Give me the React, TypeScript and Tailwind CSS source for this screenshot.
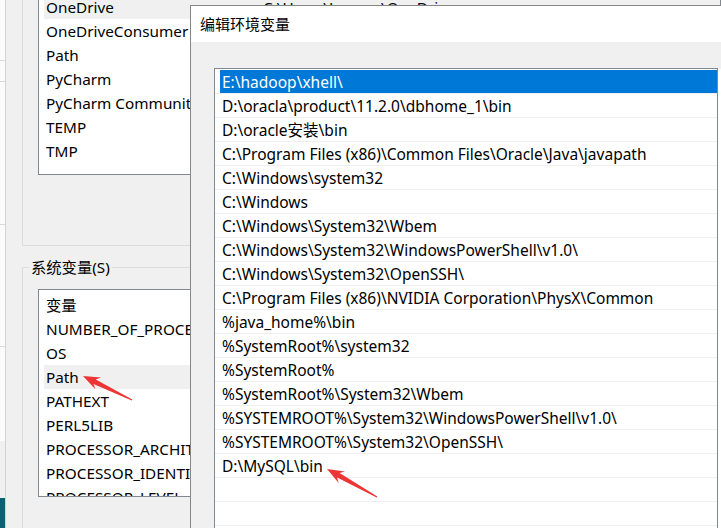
import React from "react";

const upperRows = [
  { name: "OneDrive", value: "C:\\Users\\Lenovo\\OneDrive", hl: true },
  { name: "OneDriveConsumer", value: "C:\\Users\\Lenovo\\OneDrive" },
  { name: "Path", value: "C:\\Users\\Lenovo\\AppData\\Local" },
  { name: "PyCharm", value: "D:\\PyCharm\\bin" },
  { name: "PyCharm Community Edition", value: "D:\\PyCharm CE\\bin" },
  { name: "TEMP", value: "C:\\Users\\Lenovo\\AppData\\Local\\Temp" },
  { name: "TMP", value: "C:\\Users\\Lenovo\\AppData\\Local\\Temp" },
];

const lowerRows = [
  { name: "变量" },
  { name: "NUMBER_OF_PROCESSORS" },
  { name: "OS" },
  { name: "Path", hl: true },
  { name: "PATHEXT" },
  { name: "PERL5LIB" },
  { name: "PROCESSOR_ARCHITECTURE" },
  { name: "PROCESSOR_IDENTIFIER" },
  { name: "PROCESSOR_LEVEL" },
];

const paths = [
  "E:\\hadoop\\xhell\\",
  "D:\\oracla\\product\\11.2.0\\dbhome_1\\bin",
  "D:\\oracle安装\\bin",
  "C:\\Program Files (x86)\\Common Files\\Oracle\\Java\\javapath",
  "C:\\Windows\\system32",
  "C:\\Windows",
  "C:\\Windows\\System32\\Wbem",
  "C:\\Windows\\System32\\WindowsPowerShell\\v1.0\\",
  "C:\\Windows\\System32\\OpenSSH\\",
  "C:\\Program Files (x86)\\NVIDIA Corporation\\PhysX\\Common",
  "%java_home%\\bin",
  "%SystemRoot%\\system32",
  "%SystemRoot%",
  "%SystemRoot%\\System32\\Wbem",
  "%SYSTEMROOT%\\System32\\WindowsPowerShell\\v1.0\\",
  "%SYSTEMROOT%\\System32\\OpenSSH\\",
  "D:\\MySQL\\bin",
  "",
  "",
  "",
];

function arrowPoints(tip: [number, number], tail: [number, number]) {
  const dx = tip[0] - tail[0];
  const dy = tip[1] - tail[1];
  const len = Math.hypot(dx, dy);
  const ux = dx / len;
  const uy = dy / len;
  const px = -uy;
  const py = ux;
  const headLen = 17;
  const headW = 6.5;
  const neckW = 2.6;
  const tailW = 0.6;
  const bx = tip[0] - ux * headLen;
  const by = tip[1] - uy * headLen;
  const nx = tip[0] - ux * (headLen - 4);
  const ny = tip[1] - uy * (headLen - 4);
  const pts: [number, number][] = [
    [tip[0], tip[1]],
    [bx + px * headW, by + py * headW],
    [nx + px * neckW, ny + py * neckW],
    [tail[0] + px * tailW, tail[1] + py * tailW],
    [tail[0] - px * tailW, tail[1] - py * tailW],
    [nx - px * neckW, ny - py * neckW],
    [bx - px * headW, by - py * headW],
  ];
  return pts.map((p) => `${p[0].toFixed(1)},${p[1].toFixed(1)}`).join(" ");
}

export default function App() {
  return (
    <div className="relative w-[721px] h-[528px] overflow-hidden bg-[#f0f0f0] text-[15.3px] leading-[20px] text-black font-['Noto_Sans','Noto_Sans_CJK_SC',sans-serif]">
      <div className="flex h-full">
        {/* far left strip of another window */}
        <div className="w-[5px] h-full flex flex-col shrink-0">
          <div className="h-[60px] bg-[#fbfbfb]" />
          <div className="h-px bg-[#dadada]" />
          <div className="h-[20px] bg-[#fbfbfb]" />
          <div className="h-px bg-[#dadada]" />
          <div className="h-[142px] bg-[#fbfbfb]" />
          <div className="h-px bg-[#dadada]" />
          <div className="h-[121px] bg-[#fbfbfb]" />
          <div className="h-px bg-[#dadada]" />
          <div className="h-[94px] bg-[#fbfbfb]" />
          <div className="h-[57px] bg-[#f0f0f0]" />
          <div className="flex-1 bg-[#0b6071]" />
        </div>
        <div className="w-px h-full bg-[#d4d4d4] shrink-0" />

        {/* background window */}
        <div className="flex-1 flex flex-col pl-[16px] min-w-0">
          <div className="h-[246px] border-l border-b border-[#dcdcdc] pl-[15px] shrink-0">
            <div className="h-[175px] border-x border-b border-[#828790] bg-white overflow-hidden">
              <div className="-mt-[5px] pl-[5px]">
                {upperRows.map((r, i) => (
                  <div
                    key={i}
                    className={`h-[24px] flex items-center pl-[2px] whitespace-nowrap ${r.hl ? "bg-[#f0f0f0]" : ""}`}
                  >
                    <div className="w-[217px] shrink-0 overflow-hidden">{r.name}</div>
                    <div>{r.value}</div>
                  </div>
                ))}
              </div>
            </div>
          </div>

          <fieldset className="mt-[11px] flex-1 min-w-0 border-l border-t border-[#dcdcdc]">
            <legend className="ml-[6px] px-[2px] leading-[20px]">系统变量(S)</legend>
            <div className="mt-[12px] ml-[15px] h-[208px] border border-[#828790] bg-white overflow-hidden pt-[3px] pl-[5px]">
              {lowerRows.map((r, i) => (
                <div
                  key={i}
                  className={`h-[24px] flex items-center pl-[2px] whitespace-nowrap ${r.hl ? "bg-[#f0f0f0]" : ""}`}
                >
                  {r.name}
                </div>
              ))}
            </div>
          </fieldset>
        </div>
      </div>

      {/* edit dialog */}
      <div className="absolute left-[190px] top-[5px] right-[-10px] bottom-[-10px] border-l border-t border-[#868686] bg-[#f0f0f0] flex flex-col">
        <div className="h-[36px] bg-white flex items-center pl-[9px] shrink-0 text-[15px]">编辑环境变量</div>
        <div className="flex-1 flex pl-[23px] pt-[26px]">
          <div className="w-[504px] border-l border-t border-r border-[#828790] bg-white pt-px overflow-hidden text-[15.5px]">
            {paths.map((p, i) => (
              <div key={i} className="h-[24px] border-b border-[#efefef]">
                <div
                  className={`ml-[5px] h-full flex items-center pl-[2px] whitespace-nowrap ${i === 0 ? "bg-[#0078d7] text-white" : ""}`}
                >
                  {p}
                </div>
              </div>
            ))}
          </div>
          <div className="flex-1 mt-px bg-white" />
        </div>
      </div>

      {/* red annotation arrows */}
      <svg className="absolute inset-0 pointer-events-none" width="721" height="528" viewBox="0 0 721 528">
        <polygon points={arrowPoints([83, 376], [132, 400])} fill="#ee3535" />
        <polygon points={arrowPoints([327, 469], [377, 497])} fill="#ee3535" />
      </svg>
    </div>
  );
}
